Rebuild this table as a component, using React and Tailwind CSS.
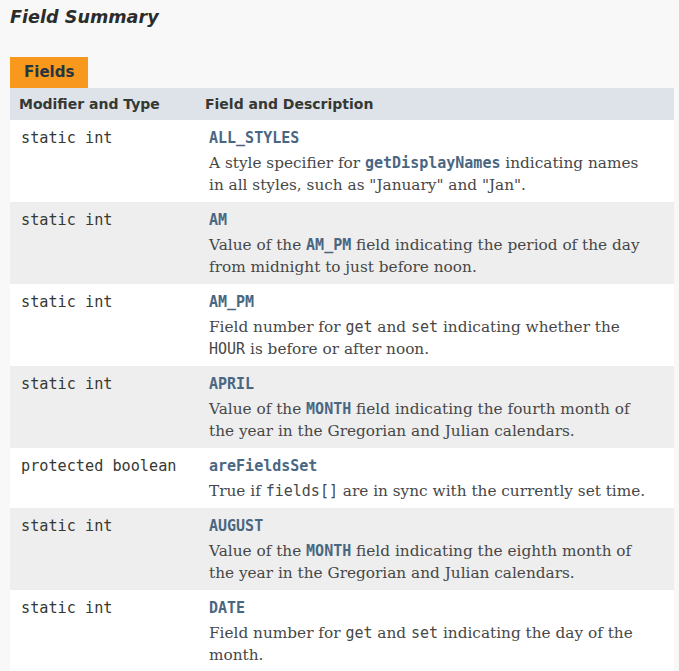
const rows = [
  {
    type: "static int",
    name: "ALL_STYLES",
    desc: [
      "A style specifier for ",
      { code: "getDisplayNames" },
      " indicating names in all styles, such as \"January\" and \"Jan\".",
    ],
  },
  {
    type: "static int",
    name: "AM",
    desc: ["Value of the ", { code: "AM_PM" }, " field indicating the period of the day from midnight to just before noon."],
  },
  {
    type: "static int",
    name: "AM_PM",
    desc: ["Field number for ", { plain: "get" }, " and ", { plain: "set" }, " indicating whether the ", { plain: "HOUR" }, " is before or after noon."],
  },
  {
    type: "static int",
    name: "APRIL",
    desc: ["Value of the ", { code: "MONTH" }, " field indicating the fourth month of the year in the Gregorian and Julian calendars."],
  },
  {
    type: "protected boolean",
    name: "areFieldsSet",
    desc: ["True if ", { plain: "fields[]" }, " are in sync with the currently set time."],
  },
  {
    type: "static int",
    name: "AUGUST",
    desc: ["Value of the ", { code: "MONTH" }, " field indicating the eighth month of the year in the Gregorian and Julian calendars."],
  },
  {
    type: "static int",
    name: "DATE",
    desc: ["Field number for ", { plain: "get" }, " and ", { plain: "set" }, " indicating the day of the month."],
  },
];

const mono = "font-['DejaVu_Sans_Mono',monospace]";

function Desc({ parts }) {
  return (
    <div className="mt-[5px] mr-[18px] font-['DejaVu_Serif',serif] text-[15.3px] leading-[22px] text-[#474747]">
      {parts.map((p, i) => {
        if (typeof p === "string") return <span key={i}>{p}</span>;
        if (p.code)
          return (
            <code key={i} className={`${mono} text-[15px] font-bold leading-none text-[#4a6782]`}>
              {p.code}
            </code>
          );
        return (
          <code key={i} className={`${mono} text-[15px] leading-none`}>
            {p.plain}
          </code>
        );
      })}
    </div>
  );
}

export default function App() {
  return (
    <div className="min-h-screen bg-[#f8f8f8] pl-[10px] pr-[5px] pt-[5px] font-['DejaVu_Sans',sans-serif] text-[14px] text-[#353833]">
      <h3 className="text-[17.6px] font-bold italic leading-[24px] text-[#2c2c2c]">Field Summary</h3>

      <div className="mt-[28px]">
        <span className="inline-block h-[31px] bg-[#f8981d] px-[14px] pt-[6px] text-[15px] font-bold leading-[18px] text-[#253441]">
          Fields
        </span>
      </div>

      <table className="w-full border-collapse">
        <thead>
          <tr className="bg-[#dee3e9] text-left text-[14px] font-bold text-[#353833]">
            <th className="h-[32px] w-[189px] pl-[9px] align-middle">Modifier and Type</th>
            <th className="h-[32px] pl-[6px] align-middle">Field and Description</th>
          </tr>
        </thead>
        <tbody>
          {rows.map((r, i) => (
            <tr key={r.name} className={i % 2 === 0 ? "bg-white" : "bg-[#eeeeee]"}>
              <td className={`${mono} whitespace-nowrap pl-[11px] pt-[9px] align-top text-[15.2px] leading-[18px] text-[#353833]`}>
                {r.type}
              </td>
              <td className="pb-[6px] pl-[10px] pt-[9px] align-top">
                <div className={`${mono} text-[15px] font-bold leading-[18px] text-[#4a6782]`}>{r.name}</div>
                <Desc parts={r.desc} />
              </td>
            </tr>
          ))}
        </tbody>
      </table>
    </div>
  );
}
